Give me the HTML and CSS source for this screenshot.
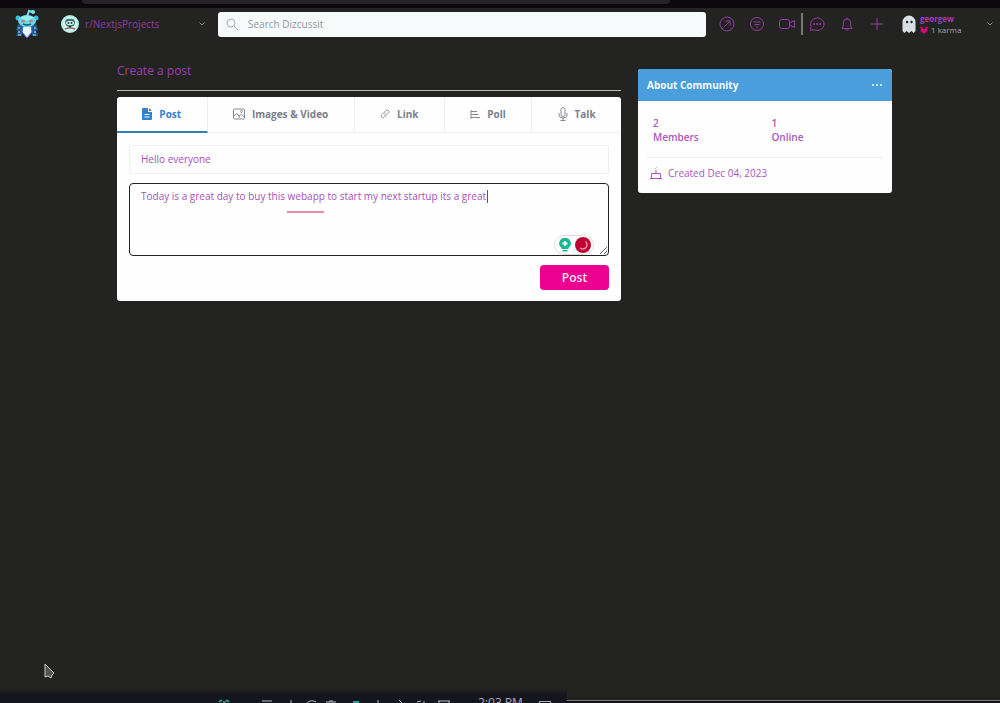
FILE: index.html
```html
<!DOCTYPE html>
<html lang="en">
<head>
    <meta charset="UTF-8">
    <meta name="viewport" content="width=device-width, initial-scale=1.0">
    <title>Create a post</title>
    <link rel="stylesheet" href="styles.css">
</head>
<body>
    <div class="window-edge"><div class="window-tab"></div></div>

    <header class="navbar">
        <div class="nav-left">
            <a href="#" class="logo" aria-label="Home">
                <svg width="24" height="30" viewBox="0 0 24 30">
                    <path d="M12 8 L14 2 L18 3" fill="none" stroke="#6fe3f5" stroke-width="2"/>
                    <circle cx="18" cy="3" r="2" fill="#7deaf5"/>
                    <circle cx="3" cy="9" r="2.500" fill="#3fb9dc"/>
                    <circle cx="21" cy="9" r="2.500" fill="#3fb9dc"/>
                    <path d="M3 15 L1 21 L3 22 L1 27 L7 27 L9 17 Z M21 15 L23 21 L21 22 L23 27 L17 27 L15 17 Z" fill="#235a8c"/>
                    <path d="M3 19h2M19 19h2M3 23h2M19 23h2M3 26h3M18 26h3" stroke="#a9e6ff" stroke-width="1"/>
                    <path d="M8 17 H16 L17 23 L12 29 L7 23 Z" fill="#e6f4ff" stroke="#5560e8"/>
                    <ellipse cx="12" cy="12" rx="9" ry="6" fill="#63dcec"/>
                    <ellipse cx="12" cy="9" rx="6" ry="2.500" fill="#8cf0f4"/>
                    <ellipse cx="8" cy="12" rx="2" ry="1.500" fill="#c97b72"/>
                    <ellipse cx="16" cy="12" rx="2" ry="1.500" fill="#c97b72"/>
                    <path d="M8 15 Q12 17 16 15" fill="none" stroke="#135a78" stroke-width="1.500"/>
                </svg>
            </a>
            <button class="community-menu">
                <svg width="18" height="18" viewBox="0 0 18 18">
                    <circle cx="9" cy="9" r="9" fill="#b5eee8"/>
                    <circle cx="9" cy="9" r="7" fill="#d9f4ee"/>
                    <path d="M4 8 Q4 3 9 4 Q14 3 14 8 Q13 12 9 12 Q5 12 4 8" fill="#397b78"/>
                    <ellipse cx="9" cy="8" rx="4" ry="2" fill="#e2f7f0"/>
                    <circle cx="7.500" cy="8" r="1" fill="#273d42"/>
                    <circle cx="10.500" cy="8" r="1" fill="#273d42"/>
                    <path d="M8 11 H10 V13 H8 Z" fill="#273d42"/>
                    <path d="M4 14 Q9 12 14 14" fill="none" stroke="#956c67" stroke-width="1.500"/>
                </svg>
                <span class="community-name">r/NextjsProjects</span>
                <svg class="chevron" width="8" height="8" viewBox="0 0 8 8"><path d="M1.500 2.500 L4 5 L6.500 2.500"/></svg>
            </button>
        </div>

        <label class="search">
            <svg width="13" height="13" viewBox="0 0 13 13"><circle cx="5" cy="5" r="4"/><path d="M8 8 L12 12"/></svg>
            <input type="text" placeholder="Search Dizcussit" aria-label="Search Dizcussit">
        </label>

        <nav class="nav-icons">
            <button aria-label="Popular"><svg viewBox="0 0 16 16"><circle cx="8" cy="8" r="7"/><path d="M5 11 L11 5 M6.500 5 H11 V9.500"/></svg></button>
            <button aria-label="Filter"><svg viewBox="0 0 16 16"><circle cx="8" cy="8" r="6.500"/><path d="M4.500 6 H11.500 M5.500 8.500 H10.500 M7 11 H9"/></svg></button>
            <button aria-label="Video"><svg viewBox="0 0 16 16"><rect x="0.500" y="3.500" width="10" height="9" rx="2"/><path d="M10.500 7 L15.500 4.500 V11.500 L10.500 9"/></svg></button>
            <span class="divider"></span>
            <button aria-label="Chat"><svg viewBox="0 0 16 16"><path d="M1.500 14.500 L2 10.500 A6.800 6.300 0 1 1 5 13.700 Z"/><path class="dots" d="M5 8h.1M8 8h.1M11 8h.1"/></svg></button>
            <button aria-label="Notifications"><svg viewBox="0 0 16 16"><path d="M3 12.500 L4.300 10 V7 A3.700 4 0 0 1 11.700 7 V10 L13 12.500 Z M6.500 13 Q8 16 9.500 13 M8 3 V1.500"/></svg></button>
            <button aria-label="Create"><svg viewBox="0 0 16 16"><path d="M8 2 V14 M2 8 H14"/></svg></button>
        </nav>

        <button class="user-menu">
            <svg width="14" height="18" viewBox="0 0 14 18">
                <path d="M0.500 16 V7 A6.500 6.500 0 0 1 13.500 7 V16 L11.500 18 L9.500 16 L7 18 L4.500 16 L2.500 18 Z" fill="#d9dfe3"/>
                <circle cx="5" cy="7" r="1.200" fill="#222"/>
                <circle cx="9.500" cy="7" r="1.200" fill="#222"/>
            </svg>
            <span class="user-info">
                <span class="user-name">georgew</span>
                <span class="karma">
                    <svg width="8" height="8" viewBox="0 0 8 8"><path d="M0 1 L2 0.500 L3 3 H5 L6 0.500 L8 1 L7 3 L7.500 5 L4 8 L0.500 5 L1 3 Z" fill="#d10a72"/></svg>
                    1 karma
                </span>
            </span>
            <svg class="chevron" width="8" height="8" viewBox="0 0 8 8"><path d="M1.500 2.500 L4 5 L6.500 2.500"/></svg>
        </button>
    </header>

    <div class="page">
        <main>
            <h1>Create a post</h1>
            <form class="card">
                <div class="tabs">
                    <button type="button" class="tab active">
                        <svg width="10" height="12" viewBox="0 0 10 12"><path d="M1 0 H6 V4 H10 V11 Q10 12 9 12 H1 Q0 12 0 11 V1 Q0 0 1 0 Z M7 0 L10 3 H7 Z" fill="#3182ce"/><path d="M2.500 6.500 H7.500 M2.500 9 H7.500" stroke="#fff"/></svg>
                        Post
                    </button>
                    <button type="button" class="tab">
                        <svg width="12" height="12" viewBox="0 0 12 12" class="line"><rect x="0.500" y="1" width="11" height="10" rx="1"/><path d="M0.500 8 L4 5.500 L7 10 M5.500 8 L8.500 6.500 L11.500 9"/><circle cx="8.500" cy="3.500" r="1"/></svg>
                        Images &amp; Video
                    </button>
                    <button type="button" class="tab">
                        <svg width="10" height="10" viewBox="0 0 12 12" class="line"><path d="M5 4 L7 2 Q9 0.500 10.500 2 Q11.500 3.500 10 5 L8 7 Q6.500 8 5 7 M7 5 Q5.500 4 4 5 L2 7 Q0.500 8.500 2 10 Q3.500 11.500 5 10 L7 8"/></svg>
                        Link
                    </button>
                    <button type="button" class="tab">
                        <svg width="10" height="10" viewBox="0 0 10 10" class="line"><path d="M1 1 V10 M1 2.500 H7 M1 5.500 H8.500 M1 8.500 H10"/></svg>
                        Poll
                    </button>
                    <button type="button" class="tab">
                        <svg width="10" height="14" viewBox="0 0 10 14" class="line"><rect x="3" y="0.500" width="4" height="9" rx="2"/><path d="M1 6 V8 Q1 11 5 11 Q9 11 9 8 V6 M5 11 V13.500 M2.500 13.500 H7.500"/></svg>
                        Talk
                    </button>
                </div>
                <div class="fields">
                    <input type="text" class="title-input" value="Hello everyone" aria-label="Title">
                    <div class="editor">
                        <textarea class="body-input" aria-label="Text" spellcheck="false">Today is a great day to buy this webapp to start my next startup its a great</textarea>
                        <span class="spell-mark"></span>
                        <span class="caret"></span>
                        <span class="helper">
                            <svg width="12" height="14" viewBox="0 0 12 14"><path d="M6 0 A5.500 5.500 0 0 1 9.500 10 V11 H2.500 V10 A5.500 5.500 0 0 1 6 0 Z M3.500 12 H8.500 V13.500 H3.500 Z" fill="#15b993"/><path d="M6 3 V8 M3.500 5.500 H8.500" stroke="#fff" stroke-width="2"/></svg>
                            <svg width="16" height="16" viewBox="0 0 16 16"><circle cx="8" cy="8" r="8" fill="#bd0634"/><path d="M10.500 4.500 A4.200 4.200 0 0 1 5 11" fill="none" stroke="#ef8aa2" stroke-width="1.500"/></svg>
                        </span>
                    </div>
                    <button type="button" class="submit">Post</button>
                </div>
            </form>
        </main>

        <aside class="card about">
            <div class="about-header">
                <h2>About Community</h2>
                <button aria-label="More"><svg width="10" height="4" viewBox="0 0 10 4"><circle cx="1" cy="2" r="1"/><circle cx="5" cy="2" r="1"/><circle cx="9" cy="2" r="1"/></svg></button>
            </div>
            <div class="about-body">
                <div class="stats">
                    <div>2<br>Members</div>
                    <div>1<br>Online</div>
                </div>
                <div class="created">
                    <svg width="12" height="12" viewBox="0 0 12 12"><path d="M0 11.500 H12 M1.500 11.500 V6.500 H10.500 V11.500 M6 6.500 V3 M5.500 1.500 L6.500 0.500"/></svg>
                    Created Dec 04, 2023
                </div>
            </div>
        </aside>
    </div>

    <svg class="pointer" width="12" height="16" viewBox="0 0 12 16"><path d="M1 1 V14 L4 13 L7 15 L8 12 L10 10 Z" fill="#555" stroke="#c8c8c8"/></svg>

    <footer class="taskbar">
        <div class="taskbar-panel">
            <svg class="tray" width="240" height="6" viewBox="0 0 240 6">
                <path d="M5 5 L8 3 M12 3 L15 5" stroke="#25a394" stroke-width="2"/>
                <path d="M9 5 H12 M48 4 H58 M77 3 V6 M112 5 H122 M115 4 H119 M164 3 V6 M185 3 L188 6 M203 5 L207 4 M210 6 V4 M224 4 H236 M225 4 V6 M235 4 V6" stroke="#b8bbc5"/>
                <path d="M93 6 Q97 2 102 5" fill="none" stroke="#b8bbc5"/>
                <path d="M139 5 H145" stroke="#25a394" stroke-width="2"/>
            </svg>
            <span class="clock">2:03 PM</span>
            <span class="tray-box"></span>
        </div>
        <div class="taskbar-line"></div>
    </footer>
</body>
</html>
```
FILE: styles.css
```css
* {
    box-sizing: border-box;
}
body {
    margin: 0;
    min-height: 100vh;
    background-color: #232321;
    color: #a957c0;
    font-family: "Open Sans", "Noto Sans", sans-serif;
    font-size: 10px;
    overflow: hidden;
}
button {
    padding: 0;
    border: none;
    background: none;
    color: inherit;
    font: inherit;
}
svg {
    display: block;
    flex: none;
}
h1, h2 {
    margin: 0;
    font-weight: 600;
}
.window-edge {
    height: 8px;
    padding: 0 33% 0 82px;
    background-color: #0b090c;
}
.window-tab {
    height: 4px;
    background-color: #262228;
    border-radius: 0 0 6px 6px;
}

/* navbar */
.navbar {
    display: flex;
    align-items: center;
    height: 32px;
    color: #8d3b9e;
}
.nav-left {
    display: flex;
    align-items: center;
    gap: 22px;
    width: 218px;
    padding: 0 12px 0 15px;
}
.community-menu {
    display: flex;
    flex: 1;
    align-items: center;
    gap: 6px;
}
.community-name {
    font-weight: 500;
}
.chevron {
    margin-left: auto;
    fill: none;
    stroke: #8d8d8d;
}
.search {
    display: flex;
    flex: 1;
    align-items: center;
    gap: 9px;
    height: 25px;
    padding: 0 8px;
    border-radius: 3px;
    background-color: #f7fafa;
}
.search svg {
    fill: none;
    stroke: #a5abae;
}
.search input {
    flex: 1;
    padding: 0;
    border: none;
    outline: none;
    background: none;
    font: inherit;
}
.search input::placeholder {
    color: #8f9699;
}
.nav-icons {
    display: flex;
    align-items: center;
    gap: 14px;
    padding: 0 17px 0 13px;
}
.nav-icons svg {
    width: 16px;
    height: 16px;
    fill: none;
    stroke: #963ba8;
}
.nav-icons .dots {
    stroke-width: 2;
    stroke-linecap: round;
}
.divider {
    width: 2px;
    height: 22px;
    margin: 0 -8px;
    background-color: #777;
}
.user-menu {
    display: flex;
    align-items: center;
    gap: 4px;
    width: 98px;
    padding-right: 6px;
    text-align: left;
}
.user-info {
    font-size: 8px;
    line-height: 11px;
}
.user-name {
    display: block;
    color: #a33db7;
    font-weight: 700;
}
.karma {
    display: flex;
    align-items: center;
    gap: 3px;
    color: #a5a5a5;
}

/* page */
.page {
    display: grid;
    grid-template-columns: 1fr 254px;
    align-items: start;
    gap: 17px;
    padding: 22px 108px 0 117px;
}
h1 {
    margin-bottom: 6px;
    padding-bottom: 10px;
    border-bottom: 1px solid #bbb;
    color: #9c3fb1;
    font-size: 12px;
    font-weight: 500;
    line-height: 18px;
}
.card {
    border-radius: 3px;
    background-color: #fefefe;
    overflow: hidden;
}
.tabs {
    display: flex;
}
.tab {
    display: flex;
    flex: 1 1 auto;
    align-items: center;
    justify-content: center;
    gap: 7px;
    height: 36px;
    padding: 0 20px 1px;
    border-right: 1px solid #edf0f2;
    border-bottom: 1px solid #edf0f2;
    color: #78818c;
    font-size: 10px;
    font-weight: 700;
    white-space: nowrap;
}
.tab:last-child {
    border-right: none;
}
.tab.active {
    border-bottom: 2px solid #3182b8;
    color: #3182ce;
}
.line {
    fill: none;
    stroke: #858b92;
}
.fields {
    display: flex;
    flex-direction: column;
    gap: 9px;
    padding: 12px 12px 11px;
}
.title-input,
.body-input {
    display: block;
    width: 100%;
    padding: 0 11px;
    background-color: #fefefe;
    color: #a94fbd;
    font: inherit;
    outline: none;
}
.title-input {
    height: 29px;
    padding-bottom: 1px;
    border: 1px solid #edf0f2;
    border-radius: 2px;
}
.editor {
    position: relative;
}
.body-input {
    height: 73px;
    padding-top: 5px;
    border: 1px solid #222;
    border-radius: 4px;
    line-height: 14px;
    resize: vertical;
}
.spell-mark {
    position: absolute;
    top: 28px;
    left: 158px;
    width: 37px;
    height: 2px;
    background-color: #ec8ba6;
}
.caret {
    position: absolute;
    top: 7px;
    left: 358px;
    width: 1px;
    height: 13px;
    background-color: #555;
}
.helper {
    position: absolute;
    right: 15px;
    bottom: 1px;
    display: flex;
    align-items: center;
    gap: 4px;
    padding: 1px 2px 1px 4px;
    border: 1px solid #ddd;
    border-radius: 12px;
    background-color: #fff;
}
.submit {
    align-self: flex-end;
    width: 69px;
    height: 25px;
    padding-bottom: 1px;
    border-radius: 4px;
    background-color: #eb0090;
    color: #fbe3f3;
    font-size: 12px;
    font-weight: 600;
}

/* sidebar */
.about {
    margin-top: 7px;
}
.about-header {
    display: flex;
    align-items: center;
    justify-content: space-between;
    height: 32px;
    padding: 0 10px 0 9px;
    background-color: #4a9edb;
    color: #f4faff;
}
.about-header svg {
    fill: #f4faff;
}
h2 {
    font-size: 10px;
    font-weight: 700;
}
.about-body {
    padding: 15px 10px 13px 9px;
    font-weight: 500;
}
.stats {
    display: grid;
    grid-template-columns: 1fr 1fr;
    column-gap: 8px;
    padding: 0 0 13px 6px;
    border-bottom: 1px solid #edf0f2;
    font-weight: 600;
    line-height: 14px;
}
.created {
    display: flex;
    align-items: center;
    gap: 6px;
    padding: 8px 0 0 3px;
    line-height: 14px;
}
.created svg {
    fill: none;
    stroke: #a957c0;
}

/* desktop */
.pointer {
    position: fixed;
    left: 44px;
    bottom: 24px;
}
.taskbar {
    position: fixed;
    right: 0;
    bottom: 0;
    left: 0;
    display: flex;
    align-items: flex-end;
}
.taskbar-panel {
    display: flex;
    align-items: flex-start;
    width: 567px;
    height: 14px;
    padding: 8px 0 0 214px;
    background: linear-gradient(#232321, #151520 6px);
    overflow: hidden;
}
.clock {
    margin: -2px 16px 0 24px;
    color: #a9abb8;
    font-size: 12px;
    line-height: 16px;
    white-space: nowrap;
}
.tray-box {
    width: 12px;
    height: 10px;
    margin-top: 4px;
    border: 1px solid #a9abb8;
}
.taskbar-line {
    flex: 1;
    height: 3px;
    border-top: 1px solid #77777d;
    background-color: #13131a;
}
```
